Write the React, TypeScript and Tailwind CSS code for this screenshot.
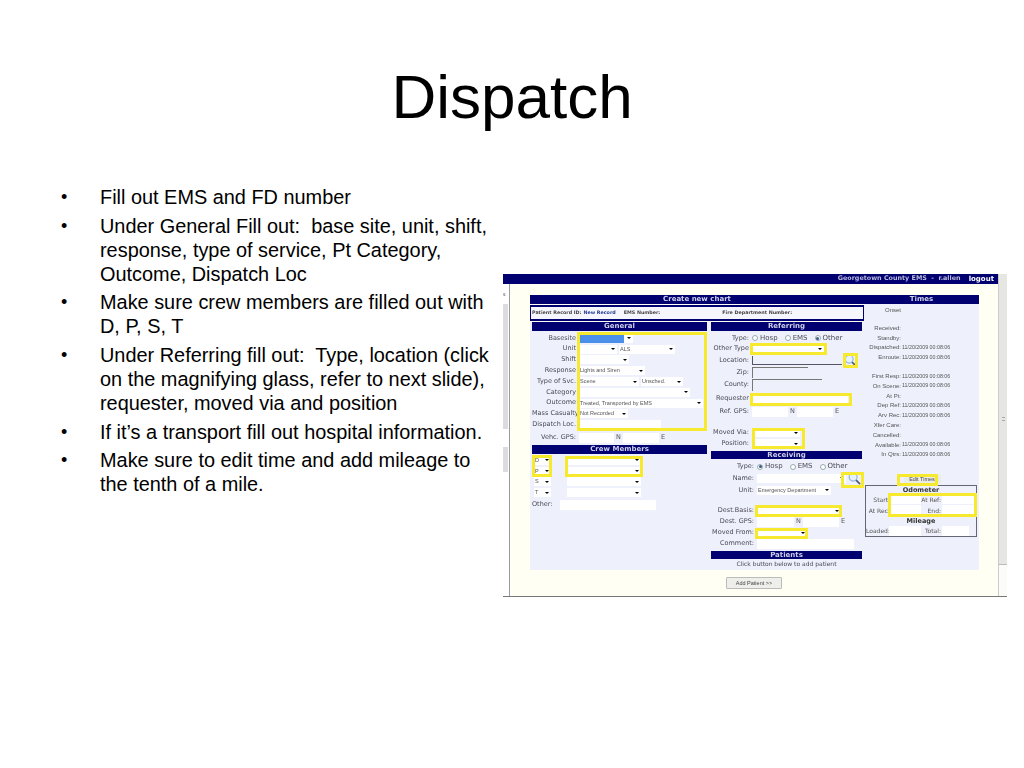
import React from "react";

const sans = "font-['Liberation_Sans',Arial,sans-serif]";

function Select({ w, text, sel }: { w: string; text?: string; sel?: boolean }) {
  return (
    <div className={`${w} h-[9px] bg-white flex items-center justify-between pl-[1px] pr-[2px] shrink-0`}>
      <span className={`flex-1 h-full text-[5.5px] leading-[9px] text-[#555] whitespace-nowrap overflow-hidden font-['Liberation_Sans',sans-serif] ${sel ? "bg-[#4a90e8] mr-[2px]" : ""}`}>{text}</span>
      <span className="w-0 h-0 border-x-[2.5px] border-x-transparent border-t-[2.5px] border-t-black shrink-0 ml-[1px]" />
    </div>
  );
}

function Input({ w, cls = "" }: { w: string; cls?: string }) {
  return <div className={`${w} h-[10px] bg-white shrink-0 ${cls}`} />;
}

function Row({ label, lw, h = "h-[10.8px]", children, cls = "" }: { label: string; lw: string; h?: string; children?: React.ReactNode; cls?: string }) {
  return (
    <div className={`flex items-center ${h} ${cls}`}>
      <span className={`${lw} text-right whitespace-nowrap text-[#4a4a55] pr-[1px] shrink-0`}>{label}</span>
      <div className="flex items-center gap-[2px] pl-[2px]">{children}</div>
    </div>
  );
}

function Head({ children, cls = "" }: { children: React.ReactNode; cls?: string }) {
  return <div className={`bg-[#000070] text-[#cfd0ea] font-bold text-[7px] leading-[9px] h-[9px] text-center ${cls}`}>{children}</div>;
}

function Radio({ on, label }: { on?: boolean; label: string }) {
  return (
    <span className="flex items-center gap-[2px] mr-[5px]">
      <span className="w-[6px] h-[6px] rounded-full border border-[#9aa] bg-white flex items-center justify-center">
        {on && <span className="w-[3px] h-[3px] rounded-full bg-[#3a5a8a]" />}
      </span>
      <span className="text-[#4a4a55] text-[7px]">{label}</span>
    </span>
  );
}

function Magnifier({ cls = "" }: { cls?: string }) {
  return (
    <svg viewBox="0 0 14 14" className={`w-[13px] h-[13px] shrink-0 ${cls}`} fill="none">
      <circle cx="5.5" cy="5.5" r="4.3" fill="#e4f2fb" stroke="#8fb4d8" strokeWidth="1.2" />
      <path d="M8.7 8.7L13 13" stroke="#50607a" strokeWidth="1.9" />
    </svg>
  );
}

function TimeRow({ label, value, cls = "h-[9.8px]" }: { label: string; value?: string; cls?: string }) {
  return (
    <div className={`flex items-center ${cls}`}>
      <span className={`w-[37px] text-right text-[#555] text-[6px] whitespace-nowrap shrink-0 ${sans}`}>{label}</span>
      {value && <span className={`pl-[1px] text-[#555] text-[5.3px] whitespace-nowrap ${sans}`}>{value}</span>}
    </div>
  );
}

function Yellow({ cls }: { cls: string }) {
  return <div className={`absolute border-[3px] border-[#f7e92e] ${cls}`} />;
}

function ChartShot() {
  const gl = "w-[45px]";
  const rl = "w-[39px]";
  const rc = "w-[44px]";
  const stamp = "11/20/2009 00:08:06";
  return (
    <div className="relative w-[504px] h-[323px] bg-[#fffff3] border-b border-[#777] font-['DejaVu_Sans',Verdana,sans-serif] text-[6.5px] blur-[0.4px] overflow-hidden">
      <div className="h-[10px] w-[495px] bg-[#000070] flex items-center justify-end pr-[4px] gap-[8px]">
        <span className="text-[#b9bbdb] text-[6.4px] font-bold">Georgetown County EMS&nbsp; -&nbsp; r.allen</span>
        <span className="text-white text-[7px] font-bold">logout</span>
      </div>
      <div className="flex h-[312px]">
        <div className="w-[7px] bg-white border-r border-[#99a] mr-[20px] shrink-0 flex flex-col">
          <span className="text-[5px] leading-[20px] text-[#333]">s</span>
          <div className="w-[5px] h-[125px] bg-[#dcdcdc]" />
          <div className="w-[5px] h-[25px] mt-[18px] bg-[#dcdcdc]" />
        </div>
        <div className="mt-[11px] flex h-[275px] w-[449px]">
          <div className="w-[334px] shrink-0">
            <Head>Create new chart</Head>
            <div className="h-[16px] mt-[1px] border-y-2 border-x border-[#000070] bg-[#f6f7fe] flex items-center text-[4.8px] font-bold pl-[1px] text-[#444]">
              <span>Patient Record ID:</span>
              <span className="ml-[2px] text-[#223a90]">New Record</span>
              <span className="ml-[8px]">EMS Number:</span>
              <span className="ml-[62px]">Fire Department Number:</span>
            </div>
            <div className="flex bg-[#eef0fb] h-[248px] mt-[1px] px-[2px]">
              <div className="w-[175px] shrink-0">
                <Head>General</Head>
                <div className="pt-[2px]">
                  <Row label="Basesite" lw={gl}><Select w="w-[54px]" sel /></Row>
                  <Row label="Unit" lw={gl}><Select w="w-[38px]" /><Select w="w-[56px]" text="ALS" /></Row>
                  <Row label="Shift" lw={gl}><Select w="w-[50px]" /></Row>
                  <Row label="Response" lw={gl}><Select w="w-[66px]" text="Lights and Siren" /></Row>
                  <Row label="Type of Svc." lw={gl}><Select w="w-[60px]" text="Scene" /><Select w="w-[42px]" text="Unsched." /></Row>
                  <Row label="Category" lw={gl}><Select w="w-[111px]" /></Row>
                  <Row label="Outcome" lw={gl}><Select w="w-[124px]" text="Treated, Transported by EMS" /></Row>
                  <Row label="Mass Casualty" lw={gl}><Select w="w-[49px]" text="Not Recorded" /></Row>
                  <Row label="Dispatch Loc." lw={gl}><Input w="w-[82px]" /></Row>
                  <Row label="Vehc. GPS:" lw={gl} cls="mt-[2px]">
                    <Input w="w-[35px]" /><span className="text-[#555]">N</span><Input w="w-[36px]" /><span className="text-[#555]">E</span>
                  </Row>
                </div>
                <Head cls="mt-[2px]">Crew Members</Head>
                <div className="pt-[1px]">
                  {["D", "P", "S", "T"].map((l) => (
                    <div key={l} className="flex items-center h-[10.8px] pl-[2px] gap-[16px]">
                      <Select w="w-[17px]" text={l} />
                      <Select w="w-[74px]" />
                    </div>
                  ))}
                  <div className="flex items-center h-[12px] mt-[1px]">
                    <span className="w-[28px] text-[#4a4a55]">Other:</span>
                    <Input w="w-[96px]" />
                  </div>
                </div>
              </div>
              <div className="w-[151px] ml-[4px] shrink-0">
                <Head>Referring</Head>
                <div className="pt-[2px]">
                  <Row label="Type:" lw={rl}><Radio label="Hosp" /><Radio label="EMS" /><Radio on label="Other" /></Row>
                  <Row label="Other Type" lw={rl}><Select w="w-[72px]" /></Row>
                  <Row label="Location:" lw={rl} h="h-[12px]">
                    <div className="w-[90px] h-[9px] border-l border-b border-[#556]" /><Magnifier />
                  </Row>
                  <Row label="Zip:" lw={rl} h="h-[12px]"><div className="w-[56px] h-[11px] border-t border-l border-[#777]" /></Row>
                  <Row label="County:" lw={rl} h="h-[13px]"><div className="w-[70px] h-[12px] border-t border-l border-[#777]" /></Row>
                  <Row label="Requester" lw={rl} h="h-[14px]"><Input w="w-[96px]" cls="!h-[9px]" /></Row>
                  <Row label="Ref. GPS:" lw={rl} h="h-[12px]">
                    <Input w="w-[36px]" /><span className="text-[#555]">N</span><Input w="w-[36px]" /><span className="text-[#555]">E</span>
                  </Row>
                  <Row label="Moved Via:" lw={rl} cls="mt-[10px]"><Select w="w-[48px]" /></Row>
                  <Row label="Position:" lw={rl}><Select w="w-[48px]" /></Row>
                </div>
                <Head cls="!h-[8px] !leading-[8px] mt-[2px]">Receiving</Head>
                <div className="pt-[2px]">
                  <Row label="Type:" lw={rc}><Radio on label="Hosp" /><Radio label="EMS" /><Radio label="Other" /></Row>
                  <Row label="Name:" lw={rc} h="h-[13px]"><Select w="w-[89px]" /><Magnifier /></Row>
                  <Row label="Unit:" lw={rc}><Select w="w-[74px]" text="Emergency Department" /></Row>
                  <Row label="Dest.Basis:" lw={rc} cls="mt-[10px]"><Select w="w-[84px]" /></Row>
                  <Row label="Dest. GPS:" lw={rc}>
                    <Input w="w-[37px]" /><span className="text-[#555]">N</span><Input w="w-[36px]" /><span className="text-[#555]">E</span>
                  </Row>
                  <Row label="Moved From:" lw={rc}><Select w="w-[50px]" /></Row>
                  <Row label="Comment:" lw={rc}><Input w="w-[97px]" /></Row>
                </div>
                <Head cls="!h-[8px] !leading-[8px] mt-[2px]">Patients</Head>
                <div className="text-center text-[#4a4a55] text-[6px] leading-[9px]">Click button below to add patient</div>
              </div>
            </div>
          </div>
          <div className="w-[115px] shrink-0 bg-[#eef0fb]">
            <Head>Times</Head>
            <TimeRow label="Onset" cls="h-[11px] mt-[1px]" />
            <TimeRow label="Received:" cls="h-[10px] mt-[7px]" />
            <TimeRow label="Standby:" cls="h-[10px]" />
            <TimeRow label="Dispatched:" value={stamp} />
            <TimeRow label="Enroute:" value={stamp} />
            <TimeRow label="First Resp:" value={stamp} cls="h-[9.8px] mt-[9px]" />
            <TimeRow label="On Scene:" value={stamp} />
            <TimeRow label="At Pt:" />
            <TimeRow label="Dep Ref:" value={stamp} />
            <TimeRow label="Arv Rec:" value={stamp} />
            <TimeRow label="Xfer Care:" />
            <TimeRow label="Cancelled:" />
            <TimeRow label="Available:" value={stamp} />
            <TimeRow label="In Qtrs:" value={stamp} />
            <div className="flex justify-center mt-[15px] pl-[1px]">
              <div className={`h-[8px] w-[37px] bg-[#ecece6] text-center text-[5.5px] leading-[8px] text-[#444] ${sans}`}>Edit Times</div>
            </div>
            <div className="mt-[2px] ml-[1px] w-[112px] h-[52px] border border-[#667]">
              <div className="text-center font-bold text-[#333] text-[6.5px] leading-[8px]">Odometer</div>
              <div className="flex items-center h-[11px] text-[#555] text-[6px]">
                <span className="w-[22px] text-right">Start</span><Input w="w-[32px] ml-[1px]" /><span className="w-[20px] text-right">At Ref:</span><Input w="w-[32px] ml-[1px]" />
              </div>
              <div className="flex items-center h-[11px] text-[#555] text-[6px]">
                <span className="w-[22px] text-right">At Rec</span><Input w="w-[32px] ml-[1px]" /><span className="w-[20px] text-right">End:</span><Input w="w-[32px] ml-[1px]" />
              </div>
              <div className="text-center font-bold text-[#333] text-[6.5px] leading-[10px]">Mileage</div>
              <div className="flex items-center h-[10px] text-[#555] text-[6px]">
                <span className="w-[22px]">Loaded:</span><Input w="w-[32px] ml-[1px]" /><span className="w-[20px] text-right">Total:</span><Input w="w-[27px] ml-[1px]" />
              </div>
            </div>
          </div>
        </div>
      </div>
      <div className="absolute left-[495px] top-0 w-[9px] h-[323px] bg-[#fbfbf8] border-l border-[#ccc]">
        <div className="h-[291px] bg-[#e6e6e3] border-b border-[#bbb] flex items-center justify-center">
          <span className="w-[3px] h-[4px] border-y border-[#aaa]" />
        </div>
      </div>
      <button className={`absolute left-[223px] top-[303px] w-[56px] h-[12px] bg-[#eeeeea] border border-[#bbb] rounded-[1px] text-[5.5px] text-[#444] ${sans}`}>Add Patient &gt;&gt;</button>
      <Yellow cls="left-[74px] top-[58px] w-[130px] h-[99px]" />
      <Yellow cls="left-[29px] top-[181px] w-[20px] h-[22px]" />
      <Yellow cls="left-[62px] top-[182px] w-[78px] h-[21px]" />
      <Yellow cls="left-[247px] top-[69px] w-[77px] h-[12px]" />
      <Yellow cls="left-[340px] top-[79px] w-[15px] h-[15px]" />
      <Yellow cls="left-[247px] top-[119px] w-[102px] h-[13px]" />
      <Yellow cls="left-[249px] top-[154px] w-[53px] h-[21px]" />
      <Yellow cls="left-[338px] top-[198px] w-[23px] h-[16px]" />
      <Yellow cls="left-[252px] top-[231px] w-[87px] h-[12px]" />
      <Yellow cls="left-[252px] top-[254px] w-[53px] h-[11px]" />
      <Yellow cls="left-[394px] top-[200px] w-[41px] h-[12px]" />
      <Yellow cls="left-[385px] top-[219px] w-[89px] h-[24px]" />
    </div>
  );
}

const bullets: string[][] = [
  ["Fill out EMS and FD number"],
  ["Under General Fill out:\u00a0 base site, unit, shift,", "response, type of service, Pt Category,", "Outcome, Dispatch Loc"],
  ["Make sure crew members are filled out with", "D, P, S, T"],
  ["Under Referring fill out:\u00a0 Type, location (click", "on the magnifying glass, refer to next slide),", "requester, moved via and position"],
  ["If it\u2019s a transport fill out hospital information."],
  ["Make sure to edit time and add mileage to", "the tenth of a mile."],
];

export default function App() {
  return (
    <div className={`w-[1024px] h-[768px] bg-white overflow-hidden ${sans} text-black`}>
      <h1 className="pt-[61px] text-center text-[62px] leading-[72px] font-normal">Dispatch</h1>
      <div className="flex mt-[52px]">
        <ul className="w-[503px] shrink-0 pl-[61px]">
          {bullets.map((lines, i) => (
            <li key={i} className="flex mb-[4.7px]">
              <span className="w-[39px] shrink-0 text-[18px] leading-[24px]">•</span>
              <div className="text-[19.9px] leading-[24px] whitespace-nowrap">
                {lines.map((l, j) => <div key={j}>{l}</div>)}
              </div>
            </li>
          ))}
        </ul>
        <div className="mt-[89px]"><ChartShot /></div>
      </div>
    </div>
  );
}
